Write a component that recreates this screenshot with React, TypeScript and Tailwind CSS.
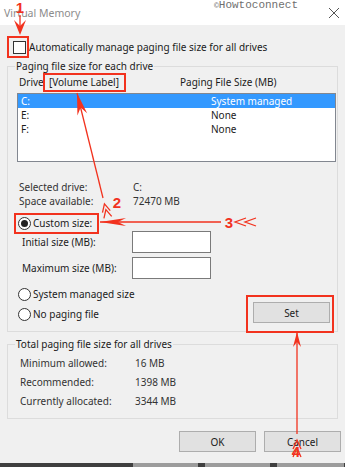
import type { ReactNode } from 'react'

const red = '#f2321e'

type Pt = [number, number]

function arrowHead(tip: Pt, from: Pt, length: number, half: number, notch: number) {
  const dx = tip[0] - from[0]
  const dy = tip[1] - from[1]
  const len = Math.hypot(dx, dy)
  const ux = dx / len
  const uy = dy / len
  const px = -uy
  const py = ux
  const bx = tip[0] - ux * length
  const by = tip[1] - uy * length
  const nx = tip[0] - ux * (length - notch)
  const ny = tip[1] - uy * (length - notch)
  return `${tip[0]},${tip[1]} ${bx + px * half},${by + py * half} ${nx},${ny} ${bx - px * half},${by - py * half}`
}

function fletching(tail: Pt, head: Pt, offsets: number[], arm: number, half: number) {
  const dx = head[0] - tail[0]
  const dy = head[1] - tail[1]
  const len = Math.hypot(dx, dy)
  const ux = dx / len
  const uy = dy / len
  const px = -uy
  const py = ux
  return offsets
    .map((o) => {
      const ax = tail[0] + ux * o
      const ay = tail[1] + uy * o
      const bx = ax - ux * arm
      const by = ay - uy * arm
      return `M${bx + px * half},${by + py * half} L${ax},${ay} L${bx - px * half},${by - py * half}`
    })
    .join(' ')
}

function Radio({ checked }: { checked?: boolean }) {
  return (
    <span className="flex h-[13px] w-[13px] shrink-0 items-center justify-center rounded-full border border-[#333] bg-white">
      {checked ? <span className="h-[7px] w-[7px] rounded-full bg-[#222]" /> : null}
    </span>
  )
}

function WinButton({ children, className = '' }: { children: ReactNode; className?: string }) {
  return (
    <div
      className={`flex h-[21px] w-[77px] items-center justify-center border border-[#adadad] bg-[#e1e1e1] ${className}`}
    >
      {children}
    </div>
  )
}

const drives = [
  { drive: 'C:', size: 'System managed', selected: true },
  { drive: 'E:', size: 'None' },
  { drive: 'F:', size: 'None' },
]

function Annotations() {
  const a2Head: Pt = [77, 93]
  const a2Tail: Pt = [103, 198]
  const a3Head: Pt = [100, 222]
  const a3Tail: Pt = [221, 222]
  const a4Head: Pt = [297, 332]
  const a4Tail: Pt = [297, 434]

  return (
    <svg
      className="pointer-events-none absolute left-0 top-0"
      width={345}
      height={467}
      viewBox="0 0 345 467"
    >
      <g fill="none" stroke={red} strokeWidth={2}>
        <rect x={8} y={37} width={20} height={20} />
        <rect x={44} y={74} width={81} height={17} />
        <rect x={15} y={214} width={83} height={19} />
        <rect x={247} y={296} width={86} height={36} />
      </g>
      <g stroke={red} strokeWidth={1.3} fill="none">
        <line x1={20} y1={15} x2={20} y2={30} />
        <line x1={a2Head[0]} y1={a2Head[1]} x2={a2Tail[0]} y2={a2Tail[1]} />
        <line x1={a3Head[0]} y1={a3Head[1]} x2={a3Tail[0]} y2={a3Tail[1]} />
        <line x1={a4Head[0]} y1={a4Head[1]} x2={a4Tail[0]} y2={a4Tail[1]} />
        <path d={fletching(a2Tail, a2Head, [-6, -12], 8, 4)} />
        <path d={fletching(a3Tail, a3Head, [-14, -24], 11, 4)} />
        <path d={fletching(a4Tail, a4Head, [-6, -14], 9, 4)} />
      </g>
      <g fill={red}>
        <polygon points={arrowHead([20, 35], [20, 15], 15, 6, 6)} />
        <polygon points={arrowHead(a2Head, a2Tail, 22, 5, 7)} />
        <polygon points={arrowHead(a3Head, a3Tail, 26, 4, 8)} />
        <polygon points={arrowHead(a4Head, a4Tail, 15, 4, 5)} />
      </g>
      <g fill={red} fontFamily="'Liberation Sans', sans-serif" fontWeight="bold" fontSize={15} textAnchor="middle">
        <text x={20} y={13}>1</text>
        <text x={117} y={208}>2</text>
        <text x={229} y={228}>3</text>
        <text x={296} y={457}>4</text>
      </g>
    </svg>
  )
}

export default function App() {
  return (
    <div className="relative flex h-[467px] w-[345px] flex-col overflow-hidden bg-[#f0f0f0] font-['Noto_Sans',sans-serif] text-[10px] leading-[14px] text-[#1b1b1b]">
      {/* title bar */}
      <div className="flex h-[25px] shrink-0 items-center justify-between bg-white pl-[4px] pr-[6px]">
        <span className="text-[10.5px] text-[#8c8c8c]">Virtual Memory</span>
        <svg width={10} height={10} viewBox="0 0 10 10" stroke="#555" strokeWidth={1}>
          <line x1={0} y1={0} x2={10} y2={10} />
          <line x1={10} y1={0} x2={0} y2={10} />
        </svg>
      </div>
      <span className="absolute left-[214px] top-[-2px] font-['Liberation_Mono',monospace] text-[11px] leading-[14px] text-[#6f6f6f]">
        <span className="text-[8px]">©</span>Howtoconnect
      </span>

      {/* automatic checkbox */}
      <div className="ml-[13px] mt-[15px] flex h-[14px] items-center gap-[3px]">
        <span className="h-[13px] w-[13px] shrink-0 border border-[#333] bg-white" />
        <span>Automatically manage paging file size for all drives</span>
      </div>

      {/* paging file size for each drive */}
      <fieldset className="ml-[7px] mt-[5px] w-[331px] border border-[#dcdcdc] pb-[8px]">
        <legend className="ml-[7px] px-[1px]">Paging file size for each drive</legend>
        <div className="mt-[2px] flex pl-[11px]">
          <span className="w-[161px]">Drive&nbsp;&nbsp;[Volume Label]</span>
          <span>Paging File Size (MB)</span>
        </div>
        <div className="ml-[9px] mt-[4px] h-[69px] w-[319px] border border-[#828790] bg-white">
          {drives.map((d) => (
            <div
              key={d.drive}
              className={`flex h-[14px] items-center ${d.selected ? 'bg-[#3399ff] text-white' : ''}`}
            >
              <span className="w-[193px] pl-[3px]">{d.drive}</span>
              <span>{d.size}</span>
            </div>
          ))}
        </div>

        <div className="mt-[18px] grid grid-cols-[114px_1fr] pl-[11px] text-[#333]">
          <span>Selected drive:</span>
          <span>C:</span>
          <span>Space available:</span>
          <span>72470 MB</span>
        </div>

        <div className="mt-[8px] flex h-[14px] items-center gap-[2px] pl-[10px]">
          <Radio checked />
          <span>Custom size:</span>
        </div>

        <div className="mt-[1px] flex flex-col gap-[4px] pl-[14px]">
          {['Initial size (MB):', 'Maximum size (MB):'].map((label) => (
            <div key={label} className="flex items-center">
              <span className="w-[110px]">{label}</span>
              <span className="h-[22px] w-[79px] border border-[#7a7a7a] bg-white" />
            </div>
          ))}
        </div>

        <div className="mt-[8px] flex items-start justify-between pl-[10px] pr-[7px]">
          <div className="flex flex-col gap-[6px]">
            <div className="flex h-[14px] items-center gap-[2px]">
              <Radio />
              <span>System managed size</span>
            </div>
            <div className="flex h-[14px] items-center gap-[2px]">
              <Radio />
              <span>No paging file</span>
            </div>
          </div>
          <WinButton className="mt-[15px]">Set</WinButton>
        </div>
      </fieldset>

      {/* totals */}
      <fieldset className="ml-[7px] mt-[5px] w-[331px] border border-[#dcdcdc] pb-[10px]">
        <legend className="ml-[7px] px-[1px]">Total paging file size for all drives</legend>
        <div className="mt-[5px] grid grid-cols-[115px_1fr] gap-y-[5px] pl-[12px] text-[#333]">
          <span>Minimum allowed:</span>
          <span>16 MB</span>
          <span>Recommended:</span>
          <span>1398 MB</span>
          <span>Currently allocated:</span>
          <span>3344 MB</span>
        </div>
      </fieldset>

      <div className="mt-[12px] flex justify-end gap-[8px] pr-[4px]">
        <WinButton>OK</WinButton>
        <WinButton>Cancel</WinButton>
      </div>

      {/* taskbar strip */}
      <div className="mt-auto flex h-[4px] shrink-0 gap-[7px] bg-[#3f3f3f] pl-[133px]">
        <span className="w-[65px] bg-[#9c9c9c]" />
        <span className="w-[65px] bg-[#9c9c9c]" />
        <span className="w-[67px] bg-[#9c9c9c]" />
      </div>

      <Annotations />
    </div>
  )
}
